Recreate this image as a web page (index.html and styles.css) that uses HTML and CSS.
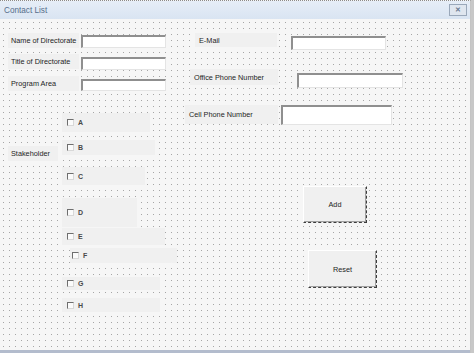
FILE: index.html
```html
<!DOCTYPE html>
<html>
<head>
<meta name="viewport" content="width=device-width, initial-scale=1">
<link rel="stylesheet" href="styles.css">
</head>
<body>

<div class="window">
  <div class="titlebar">
    <span class="title">Contact List</span>
    <span class="closebtn">&#x2715;</span>
  </div>

  <!-- designer canvas: controls sit where they were dropped -->
  <div class="canvas">
    <div class="lbl lbl-name">Name of Directorate</div>
    <div class="txt txt-name"></div>

    <div class="lbl lbl-title">Title of Directorate</div>
    <div class="txt txt-title"></div>

    <div class="lbl lbl-program">Program Area</div>
    <div class="txt txt-program"></div>

    <div class="lbl lbl-email">E-Mail</div>
    <div class="txt txt-email"></div>

    <div class="lbl lbl-office">Office Phone Number</div>
    <div class="txt txt-office"></div>

    <div class="lbl lbl-cell">Cell Phone Number</div>
    <div class="txt txt-cell"></div>

    <div class="lbl lbl-stake">Stakeholder</div>

    <div class="chk chk-a"><span class="box"></span>A</div>
    <div class="chk chk-b"><span class="box"></span>B</div>
    <div class="chk chk-c"><span class="box"></span>C</div>
    <div class="chk chk-d"><span class="box"></span>D</div>
    <div class="chk chk-e"><span class="box"></span>E</div>
    <div class="chk chk-f"><span class="box"></span>F</div>
    <div class="chk chk-g"><span class="box"></span>G</div>
    <div class="chk chk-h"><span class="box"></span>H</div>

    <div class="btn btn-add">Add</div>
    <div class="btn btn-reset">Reset</div>
  </div>
  <div class="bottombar"></div>
</div>

</body>
</html>
```

FILE: styles.css
```css
body {
  margin: 0;
  background: #c8c8c8;
  font-family: "Liberation Sans", Arial, sans-serif;
}

.window {
  width: 471px;
  height: 353px;
  display: flex;
  flex-direction: column;
  border-top: 1px dotted #8a8a8a;
  border-right: 1px solid #c4c4c4;
  box-sizing: border-box;
  background: #f6f6f6;
}

.titlebar {
  height: 18px;
  display: flex;
  align-items: center;
  justify-content: space-between;
  padding: 0 3px 0 4px;
  background: linear-gradient(#e6edf7, #d9e4f2);
}

.title {
  font-size: 8.2px;
  color: #566d8a;
}

.closebtn {
  width: 18px;
  height: 12px;
  box-sizing: border-box;
  border: 1px solid #9aa8ba;
  background: #dfe6ef;
  color: #6c7c92;
  font-size: 7px;
  font-weight: bold;
  line-height: 10px;
  text-align: center;
}

.canvas {
  flex: 1;
  position: relative;
  background-color: #f6f6f6;
  background-image: conic-gradient(from 270deg at 1px 1px, #a6a6a6 90deg, transparent 0);
  background-size: 6px 6px;
  background-position: 3px 3px;
}

.bottombar {
  height: 3px;
  background: #b3bccd;
}

/* labels */
.lbl {
  position: absolute;
  display: flex;
  align-items: center;
  padding-left: 3px;
  box-sizing: border-box;
  background: #f0f0f0;
  font-size: 7.3px;
  color: #1e1e1e;
  white-space: nowrap;
}

.lbl-name    { left: 8px;   top: 14px;  width: 71px; height: 15px; }
.lbl-title   { left: 8px;   top: 35px;  width: 71px; height: 15px; }
.lbl-program { left: 8px;   top: 57px;  width: 71px; height: 15px; }
.lbl-email   { left: 195px; top: 14px;  width: 82px; height: 14px; padding-left: 4px; }
.lbl-office  { left: 190px; top: 50px;  width: 88px; height: 16px; padding-left: 4px; }
.lbl-cell    { left: 185px; top: 86px;  width: 93px; height: 19px; padding-left: 4px; }
.lbl-stake   { left: 8px;   top: 127px; width: 50px; height: 15px; }

/* text boxes */
.txt {
  position: absolute;
  box-sizing: border-box;
  background: #ffffff;
  border-top: 2px solid #8f8f8f;
  border-left: 2px solid #8f8f8f;
  border-right: 1px solid #e4e4e4;
  border-bottom: 1px solid #e4e4e4;
}

.txt-name    { left: 81px;  top: 16px; width: 85px;  height: 13px; }
.txt-title   { left: 81px;  top: 38px; width: 85px;  height: 13px; }
.txt-program { left: 81px;  top: 60px; width: 85px;  height: 12px; }
.txt-email   { left: 291px; top: 17px; width: 95px;  height: 14px; }
.txt-office  { left: 297px; top: 54px; width: 106px; height: 15px; }
.txt-cell    { left: 281px; top: 86px; width: 111px; height: 20px; }

/* check boxes */
.chk {
  position: absolute;
  display: flex;
  align-items: center;
  padding-left: 5px;
  box-sizing: border-box;
  background: #f0f0f0;
  font-size: 7px;
  font-weight: bold;
  color: #4a4a4a;
}

.chk .box {
  width: 7px;
  height: 7px;
  margin-right: 4px;
  box-sizing: border-box;
  background: #fbfbfb;
  border-top: 1px solid #6e6e6e;
  border-left: 1px solid #6e6e6e;
  border-right: 1px solid #d8d8d8;
  border-bottom: 1px solid #d8d8d8;
}

.chk-a { left: 62px; top: 94px;  width: 88px;  height: 19px; }
.chk-b { left: 62px; top: 121px; width: 93px;  height: 15px; }
.chk-c { left: 62px; top: 148px; width: 83px;  height: 18px; }
.chk-d { left: 62px; top: 179px; width: 75px;  height: 29px; }
.chk-e { left: 62px; top: 209px; width: 103px; height: 17px; }
.chk-f { left: 70px; top: 229px; width: 107px; height: 15px; padding-left: 2px; }
.chk-g { left: 62px; top: 258px; width: 98px;  height: 13px; }
.chk-h { left: 62px; top: 279px; width: 98px;  height: 14px; }

/* command buttons */
.btn {
  position: absolute;
  display: flex;
  align-items: center;
  justify-content: center;
  box-sizing: border-box;
  background: #f0f0f0;
  border-top: 1px solid #ffffff;
  border-left: 1px solid #ffffff;
  border-right: 1px dashed #3c3c3c;
  border-bottom: 1px dashed #3c3c3c;
  box-shadow: inset -1px -1px 0 #a0a0a0;
  font-size: 7.3px;
  color: #1e1e1e;
}

.btn-add   { left: 303px; top: 167px; width: 64px; height: 37px; }
.btn-reset { left: 308px; top: 231px; width: 69px; height: 38px; }
```
